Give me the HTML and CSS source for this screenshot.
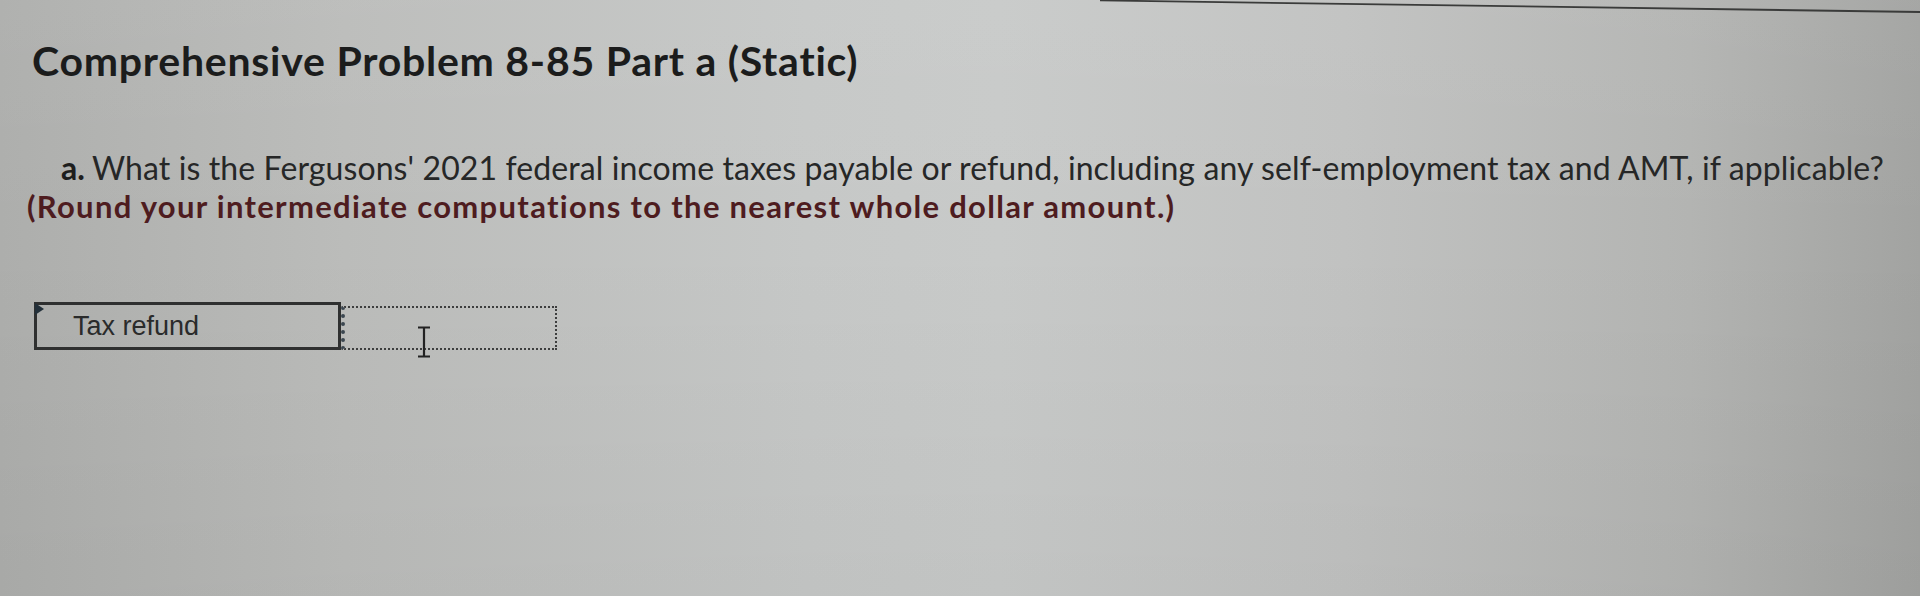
FILE: index.html
```html
<!DOCTYPE html>
<html lang="en">
<head>
<meta charset="utf-8">
<title>Comprehensive Problem 8-85 Part a (Static)</title>
<link rel="stylesheet" href="styles.css">
</head>
<body>
<svg class="edge-line" width="820" height="16" viewBox="0 0 820 16"><line x1="0" y1="0.4" x2="820" y2="12" stroke="#3a3b3a" stroke-width="1.8"/></svg>
<main class="page">
  <h1 class="title">Comprehensive Problem 8-85 Part a (Static)</h1>
  <div class="question"><b class="letter">a.</b><span class="qtext">What is the Fergusons' 2021 federal income taxes payable or refund, including any self-employment tax and AMT, if applicable?</span></div>
  <p class="note">(Round your intermediate computations to the nearest whole dollar amount.)</p>
  <div class="answer">
    <div class="label-cell"><span class="corner"></span>Tax refund</div>
    <div class="input-cell">
      <svg class="ibeam" width="18" height="32" viewBox="0 0 18 32"><path d="M3 1.5h12M9 1.5v29M3 30.5h12" stroke="#222" stroke-width="2.2" fill="none"/></svg>
    </div>
  </div>
</main>
</body>
</html>
```
FILE: styles.css
```css
html, body {
  margin: 0;
  padding: 0;
}
body {
  width: 1920px;
  height: 596px;
  overflow: hidden;
  position: relative;
  font-family: "Lato", "Open Sans", sans-serif;
  background:
    linear-gradient(180deg, rgba(255,255,255,0.04) 0%, rgba(0,0,0,0) 40%, rgba(0,0,0,0.03) 100%),
    linear-gradient(90deg, #adaeac 0%, #bbbcba 18%, #c6c8c7 42%, #c8cac9 52%, #c1c2c1 70%, #b3b4b2 88%, #a2a3a1 100%);
}
.edge-line {
  position: absolute;
  left: 1100px;
  top: 0;
}
.page {
  padding: 37px 0 0 32px;
}
.title {
  margin: 0;
  font-size: 41px;
  font-weight: 700;
  color: #1b1c1c;
  line-height: 48px;
  letter-spacing: 0.75px;
}
.question {
  display: flex;
  gap: 7px;
  margin: 66px 0 0 29px;
  font-size: 32px;
  font-weight: 400;
  color: #262727;
  line-height: 34px;
  letter-spacing: 0.1px;
  white-space: nowrap;
}
.letter {
  font-weight: 700;
  color: #1e1e1e;
}
.note {
  margin: 4px 0 0 -5px;
  font-size: 31px;
  font-weight: 700;
  color: #4e1c1f;
  line-height: 34px;
  letter-spacing: 1.3px;
}
.answer {
  display: flex;
  margin: 79px 0 0 2px;
  height: 48px;
}
.label-cell {
  position: relative;
  width: 307px;
  border: 3px solid #2f3030;
  display: flex;
  align-items: center;
  padding-left: 36px;
  box-sizing: border-box;
  font-family: "Liberation Sans", Arial, sans-serif;
  font-size: 27px;
  color: #2a2b2b;
}
.corner {
  position: absolute;
  left: -2px;
  top: -2px;
  width: 0;
  height: 0;
  border-top: 6px solid transparent;
  border-bottom: 6px solid transparent;
  border-left: 9px solid #23303a;
}
.input-cell {
  position: relative;
  width: 216px;
  margin-top: 4px;
  box-sizing: border-box;
  border: 2px dotted #3d3e3e;
  border-left: 4px dotted #3b4650;
}
.ibeam {
  position: absolute;
  left: 70px;
  top: 18px;
}
```
